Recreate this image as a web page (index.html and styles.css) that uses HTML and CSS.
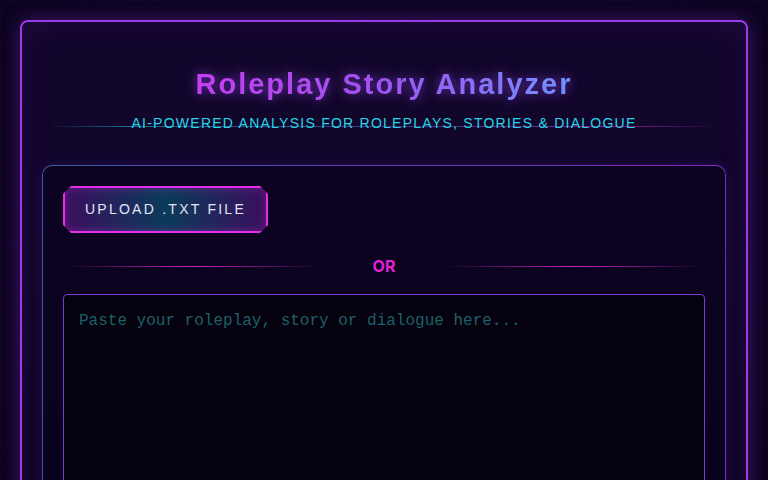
FILE: index.html
```html
<!DOCTYPE html>
<html lang="en">
<head>
<meta charset="utf-8">
<title>Roleplay Story Analyzer</title>
<link rel="stylesheet" href="styles.css">
</head>
<body>
  <main class="shell">
    <header class="masthead">
      <h1 class="title">Roleplay Story Analyzer</h1>
      <p class="tagline">AI-powered analysis for roleplays, stories &amp; dialogue</p>
    </header>

    <section class="panel">
      <label class="upload-btn">
        <input type="file" accept=".txt" class="file-input">
        UPLOAD .TXT FILE
      </label>

      <div class="divider"><span>OR</span></div>

      <textarea class="story-input" placeholder="Paste your roleplay, story or dialogue here..."></textarea>
    </section>
  </main>
</body>
</html>
```

FILE: styles.css
```css
* { box-sizing: border-box; }

html, body {
  margin: 0;
  height: 100%;
}

body {
  background-color: #10052a;
  background-image:
    linear-gradient(90deg, rgba(120, 60, 200, 0.035) 1px, transparent 1px),
    linear-gradient(rgba(120, 60, 200, 0.035) 1px, transparent 1px),
    radial-gradient(ellipse at center, #13062e 0%, #0c0320 100%);
  background-size: 40px 40px, 40px 40px, 100% 100%;
  font-family: "Liberation Sans", Arial, sans-serif;
  color: #e0e0f0;
  padding: 20px;
  overflow: hidden;
}

.shell {
  border: 2px solid #9a3be6;
  border-radius: 8px;
  background: linear-gradient(180deg, #12062c 0%, #0e0424 100%);
  box-shadow: 0 0 18px rgba(154, 59, 230, 0.35), inset 0 0 30px rgba(80, 20, 140, 0.25);
  padding: 46px 20px 20px;
  min-height: 600px;
}

.masthead {
  position: relative;
  text-align: center;
  margin-bottom: 34px;
}

.masthead::after {
  content: "";
  position: absolute;
  left: 6px;
  right: 6px;
  top: 58px;
  height: 1px;
  background: linear-gradient(90deg, transparent 0%, rgba(34, 180, 200, 0.6) 12%, rgba(90, 110, 200, 0.5) 50%, rgba(200, 40, 200, 0.65) 85%, transparent 100%);
}

.title {
  margin: 0;
  font-size: 29px;
  line-height: 32px;
  font-weight: 700;
  letter-spacing: 2px;
  background: linear-gradient(90deg, #c43ff0 0%, #9d55ef 50%, #6f92ff 100%);
  -webkit-background-clip: text;
  background-clip: text;
  color: transparent;
  display: inline-block;
  filter: drop-shadow(0 0 6px rgba(150, 70, 240, 0.7));
}

.tagline {
  position: relative;
  z-index: 1;
  margin: 15px 0 0;
  font-size: 14px;
  line-height: 16px;
  letter-spacing: 1.25px;
  text-transform: uppercase;
  color: #27d6e6;
}

.panel {
  border: 1px solid transparent;
  border-radius: 10px;
  background:
    linear-gradient(180deg, #0c0322, #08021a) padding-box,
    linear-gradient(90deg, #3c5fa4 0%, #5a3fb0 45%, #7a2ac0 100%) border-box;
  box-shadow: 0 0 12px rgba(100, 40, 180, 0.25);
  padding: 20px;
}

.upload-btn {
  display: inline-block;
  padding: 13px 20px;
  border: 2px solid #e02fe6;
  background: linear-gradient(90deg, #3a0f5e 0%, #0b3b5a 50%, #3a0f5e 100%);
  color: #e4e2f6;
  font-size: 14px;
  line-height: 17px;
  letter-spacing: 2.25px;
  cursor: pointer;
  clip-path: polygon(8px 0, calc(100% - 8px) 0, 100% 8px, 100% calc(100% - 8px), calc(100% - 8px) 100%, 8px 100%, 0 calc(100% - 8px), 0 8px);
  box-shadow: inset 0 0 8px rgba(224, 47, 230, 0.35);
}

.file-input { display: none; }

.divider {
  display: flex;
  align-items: center;
  gap: 50px;
  margin: 24px 0 19px;
}

.divider::before,
.divider::after {
  content: "";
  flex: 1;
  height: 1px;
  background: linear-gradient(90deg, transparent 0%, rgba(220, 40, 210, 0.9) 50%, transparent 100%);
}

.divider span {
  font-family: Inter, "Noto Sans", sans-serif;
  font-weight: 700;
  font-size: 16px;
  line-height: 18px;
  color: #e021d6;
}

.story-input {
  display: block;
  width: 100%;
  height: 320px;
  resize: vertical;
  padding: 15px;
  border: 1px solid #7b3ad2;
  border-radius: 4px;
  background: #05010f;
  color: #c8d8f0;
  font-family: "Courier New", "Nimbus Mono PS", "Nimbus Mono L", FreeMono, Courier, "Liberation Mono", monospace;
  font-size: 16px;
  line-height: 22px;
  outline: none;
}

.story-input::placeholder {
  color: #1e6068;
}
```
